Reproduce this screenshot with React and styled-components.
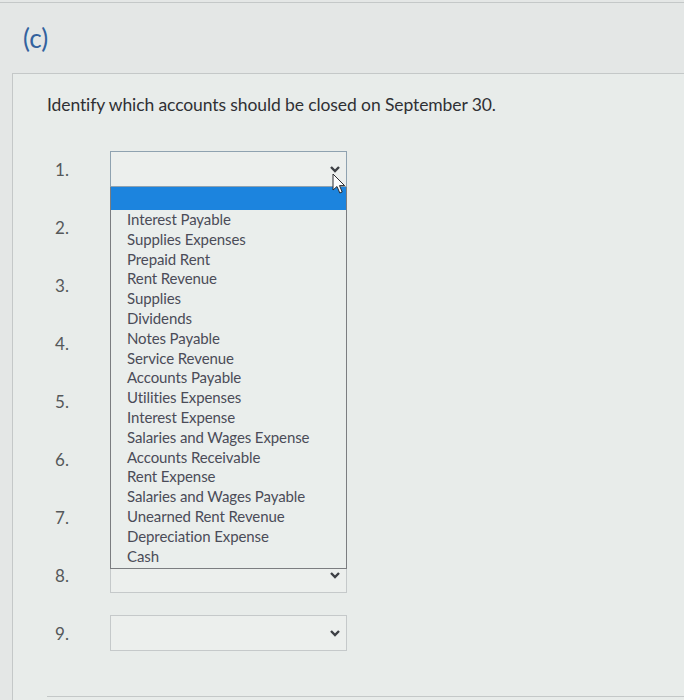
import React from "react";
import styled, { createGlobalStyle } from "styled-components";

const GlobalStyle = createGlobalStyle`
  html, body {
    margin: 0;
    padding: 0;
    background: #e4e7e6;
    font-family: Lato, "Open Sans", sans-serif;
  }
`;

const Page = styled.div`
  width: 684px;
  height: 700px;
  overflow: hidden;
  border-top: 1px solid #c4c8c8;
  margin-top: 2px;
  box-sizing: border-box;
`;

const PartLabel = styled.div`
  padding: 20px 0 0 23px;
  height: 70px;
  box-sizing: border-box;
  font-size: 26px;
  line-height: 30px;
  color: #33629e;
`;

const Panel = styled.div`
  margin-left: 12px;
  border-top: 1px solid #c4c8c8;
  border-left: 1px solid #c4c8c8;
  padding: 20px 0 0 34px;
  background: #e8ecea;
  height: 700px;
`;

const Question = styled.p`
  margin: 0 0 35px;
  font-size: 17.5px;
  line-height: 22px;
  color: #2f3034;
  letter-spacing: -0.1px;
`;

const AnswerList = styled.ol`
  list-style: none;
  margin: 0;
  padding: 0 0 0 8px;
  display: flex;
  flex-direction: column;
  gap: 22px;
`;

const AnswerRow = styled.li`
  display: grid;
  grid-template-columns: 55px 237px;
  align-items: center;
  height: 36px;
`;

const Num = styled.span`
  font-size: 17px;
  color: #55585a;
`;

const SelectWrap = styled.div`
  position: relative;
  height: 36px;
`;

const SelectBox = styled.div`
  height: 36px;
  box-sizing: border-box;
  border: 1px solid ${p => (p.$open ? "#8fa2b0" : "#c5c9ca")};
  background: rgba(255, 255, 255, 0.18);
  display: flex;
  align-items: center;
  justify-content: flex-end;
  padding-right: 5px;
`;

const Menu = styled.div`
  position: absolute;
  top: 36px;
  left: 0;
  width: 237px;
  box-sizing: border-box;
  border: 1px solid #7b7d80;
  border-top: none;
  background: #eaeeec;
  z-index: 2;
`;

const MenuBlank = styled.div`
  height: 23px;
  background: #1c84de;
`;

const MenuItems = styled.ul`
  list-style: none;
  margin: 0;
  padding: 0 0 2px 16px;
`;

const MenuItem = styled.li`
  font-size: 15px;
  line-height: 19.8px;
  color: #4b4c58;
  letter-spacing: -0.1px;
`;

const Cursor = styled.svg`
  position: absolute;
  right: 1px;
  top: 22px;
  z-index: 3;
`;

const NextPart = styled.div`
  margin: 45px 0 0 0;
  border-top: 1px solid #c4c8c8;
`;

const accounts = [
  "Interest Payable",
  "Supplies Expenses",
  "Prepaid Rent",
  "Rent Revenue",
  "Supplies",
  "Dividends",
  "Notes Payable",
  "Service Revenue",
  "Accounts Payable",
  "Utilities Expenses",
  "Interest Expense",
  "Salaries and Wages Expense",
  "Accounts Receivable",
  "Rent Expense",
  "Salaries and Wages Payable",
  "Unearned Rent Revenue",
  "Depreciation Expense",
  "Cash",
];

const Chevron = () => (
  <svg width="12" height="8" viewBox="0 0 12 8">
    <path d="M2 2 L6 6 L10 2" fill="none" stroke="#3c3f44" strokeWidth="2.4" />
  </svg>
);

const Pointer = () => (
  <Cursor width="14" height="22" viewBox="0 0 14 22">
    <path
      d="M1 1 L1 17 L5 13.5 L7.8 20 L10.2 19 L7.5 12.6 L12.6 12.6 Z"
      fill="#fdfdfd"
      stroke="#2a2c30"
      strokeWidth="1"
      strokeLinejoin="round"
    />
  </Cursor>
);

export default function App() {
  const rows = [1, 2, 3, 4, 5, 6, 7, 8, 9];
  return (
    <>
      <GlobalStyle />
      <Page>
        <PartLabel>(c)</PartLabel>
        <Panel>
          <Question>Identify which accounts should be closed on September 30.</Question>
          <AnswerList>
            {rows.map(n => (
              <AnswerRow key={n}>
                <Num>{n}.</Num>
                <SelectWrap>
                  <SelectBox $open={n === 1}>
                    <Chevron />
                  </SelectBox>
                  {n === 1 && (
                    <>
                      <Pointer />
                      <Menu>
                        <MenuBlank />
                        <MenuItems>
                          {accounts.map(a => (
                            <MenuItem key={a}>{a}</MenuItem>
                          ))}
                        </MenuItems>
                      </Menu>
                    </>
                  )}
                </SelectWrap>
              </AnswerRow>
            ))}
          </AnswerList>
          <NextPart />
        </Panel>
      </Page>
    </>
  );
}
